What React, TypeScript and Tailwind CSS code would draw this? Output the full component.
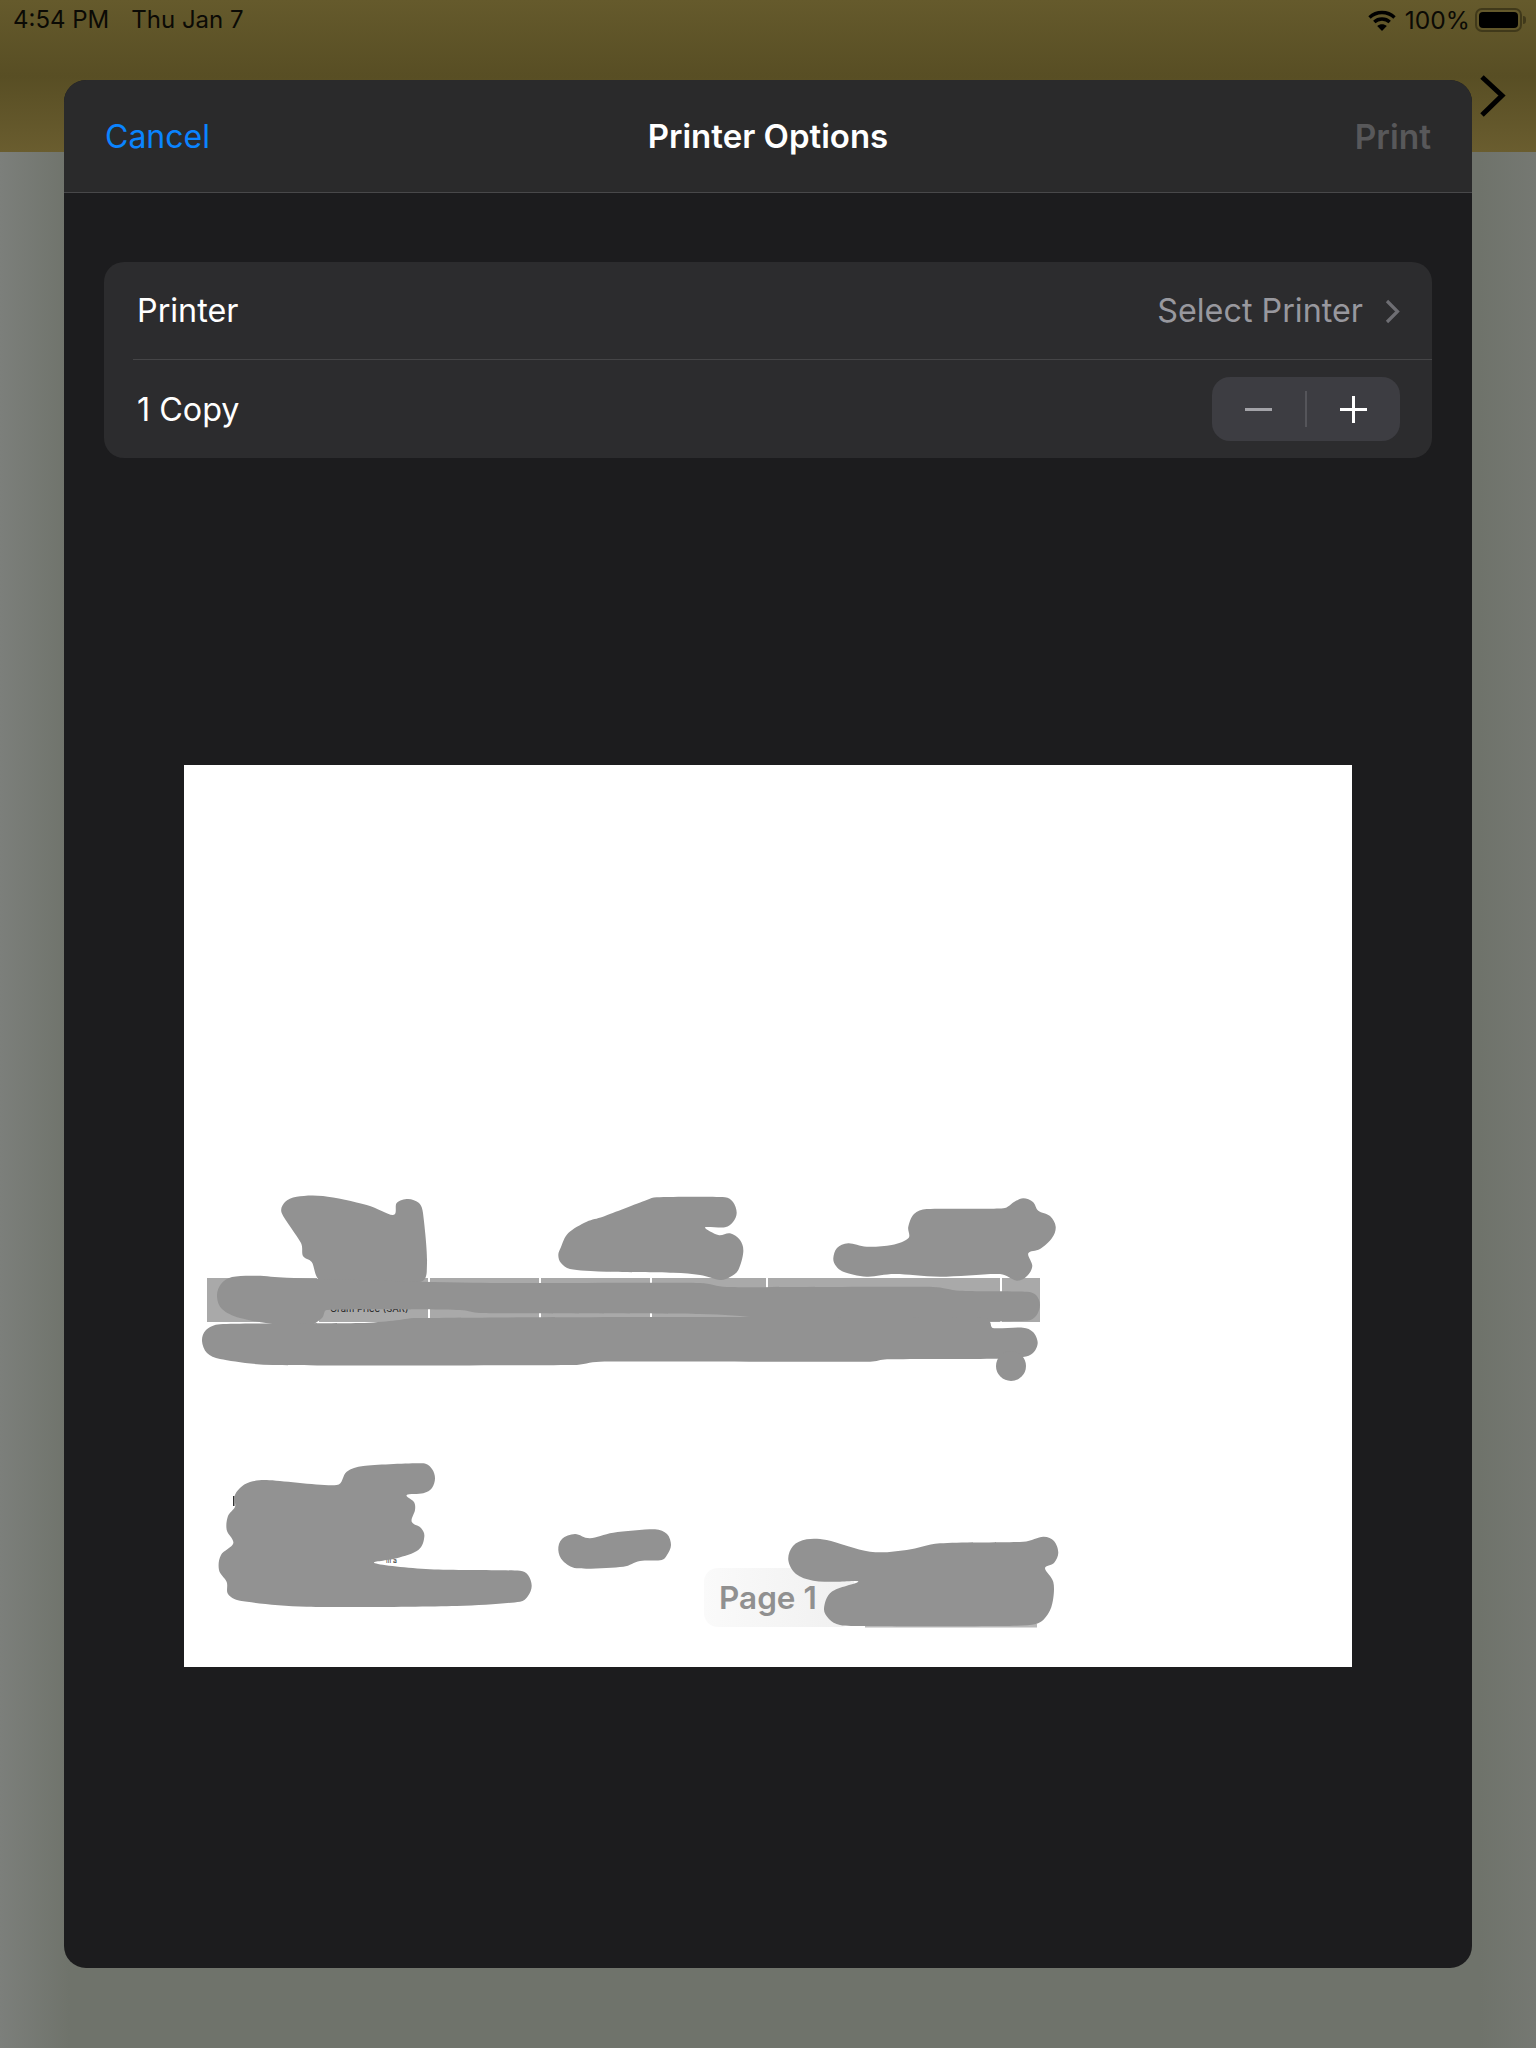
type Pt = [number, number];

// keep a bezier handle shorter than its segment, long neighbours would overshoot otherwise
function handle(from: Pt, to: Pt, dx: number, dy: number): Pt {
  const len = Math.hypot(to[0] - from[0], to[1] - from[1]);
  const size = Math.hypot(dx, dy) || 1;
  const k = Math.min(1, (0.4 * len) / size);
  return [from[0] + dx * k, from[1] + dy * k];
}

// closed catmull-rom through the traced points, so the scribbles stay soft
function blob(points: Pt[]) {
  const n = points.length;
  let d = `M${points[0][0]} ${points[0][1]}`;
  for (let i = 0; i < n; i++) {
    const p0 = points[(i - 1 + n) % n];
    const p1 = points[i];
    const p2 = points[(i + 1) % n];
    const p3 = points[(i + 2) % n];
    const c1 = handle(p1, p2, (p2[0] - p0[0]) / 6, (p2[1] - p0[1]) / 6);
    const c2 = handle(p2, p1, -(p3[0] - p1[0]) / 6, -(p3[1] - p1[1]) / 6);
    d += `C${c1[0].toFixed(1)} ${c1[1].toFixed(1)} ${c2[0].toFixed(1)} ${c2[1].toFixed(1)} ${p2[0]} ${p2[1]}`;
  }
  return d + 'Z';
}

const scribbles: Pt[][] = [
  // top left
  [[281.7, 1213], [285, 1202], [296.7, 1196.7], [323, 1196], [366.7, 1205], [393, 1215], [396.7, 1203], [408, 1199], [419, 1203], [423, 1213], [427, 1263], [420, 1282], [323, 1282], [311.7, 1262], [303, 1256], [301, 1243]],
  // upper line over the table head
  [[217, 1296], [221, 1284], [232, 1277], [257, 1275.7], [287, 1277.7], [473, 1282.7], [700, 1283], [727, 1287], [933, 1287], [960, 1290.7], [1027, 1291.7], [1036, 1295], [1040, 1305], [1036, 1316], [1027, 1320.7], [800, 1324], [760, 1318], [700, 1314], [480, 1313], [460, 1310], [327, 1310], [322, 1318], [310, 1325], [280, 1325], [240, 1318], [222, 1309]],
  // lower line
  [[202, 1341], [206, 1330], [220, 1324.3], [360, 1323], [393, 1320.7], [417, 1318], [700, 1317], [985, 1318], [990, 1322], [993, 1328], [1023, 1327.7], [1033, 1332], [1037.7, 1342.7], [1033, 1353], [1023, 1357], [997, 1358.7], [887, 1359.3], [870, 1361.7], [600, 1361.7], [573, 1365], [273, 1365], [220, 1359], [207, 1353]],
  // top middle
  [[558.3, 1255], [561, 1247], [568.3, 1233], [586.7, 1221.7], [603, 1216.7], [646.7, 1200], [656.7, 1197.3], [725, 1197.3], [733, 1202], [736.7, 1212.7], [733, 1222], [725, 1227.3], [705, 1227.3], [718.3, 1235], [730, 1233.3], [740, 1240], [743.3, 1251.7], [738.3, 1270], [730, 1277], [720, 1280], [700, 1275], [673.3, 1272.7], [606.7, 1271.7], [570, 1269], [561, 1263]],
  // top right
  [[833.3, 1258.3], [837, 1248], [848.3, 1243.3], [866.7, 1246.7], [891.7, 1245], [908.3, 1238.3], [908.3, 1226.7], [914, 1214], [926.7, 1209], [1003.3, 1208.3], [1014, 1202], [1023.3, 1198.3], [1033, 1202], [1038.3, 1210.7], [1050, 1216], [1055.7, 1226.7], [1052, 1238], [1040, 1249], [1028.3, 1253.3], [1032.3, 1266], [1027, 1276], [1016.7, 1280.7], [1000, 1274], [940, 1276.7], [895, 1274], [866.7, 1276.7], [843.3, 1271.7], [836, 1266]],
  // bottom left
  [[234.3, 1496.7], [240, 1488], [250, 1482], [266.7, 1480], [336.7, 1485], [346.7, 1471.7], [363.3, 1466], [423.3, 1463.3], [432, 1469], [435, 1478.3], [432, 1488], [423.3, 1493.3], [406.7, 1495], [414, 1502], [415, 1510], [411.7, 1521.7], [421, 1528], [424.3, 1536.7], [418.3, 1550], [396.7, 1558.3], [375, 1563.3], [430, 1569.3], [520, 1570.7], [528, 1575], [531.7, 1585.7], [528, 1596], [520, 1601.7], [456.7, 1606], [306.7, 1606.7], [240, 1600.7], [228, 1594], [226.7, 1582], [219, 1570], [221, 1555], [233.3, 1543.3], [226.7, 1530], [228, 1516], [235, 1506.7]],
  // bottom middle
  [[558.3, 1550], [562, 1539], [575, 1534], [590, 1538.3], [613.3, 1532.7], [655, 1529.3], [667, 1534], [671, 1545], [667, 1555], [661.7, 1560], [640, 1561], [623.3, 1566.7], [576.7, 1568.3], [563, 1561]],
  // bottom right
  [[788.3, 1560], [793, 1546], [806.7, 1539.3], [826.7, 1540], [870, 1551.7], [906.7, 1550], [940, 1543.3], [1023.3, 1541.7], [1043.3, 1536.7], [1054, 1541], [1058.3, 1552.7], [1054, 1563], [1045, 1568.3], [1053.3, 1582], [1053, 1600], [1048, 1614], [1036, 1624], [1000, 1626], [865, 1626], [840, 1625], [829, 1619], [824, 1608.3], [831.7, 1591.7], [858.3, 1581.7], [836.7, 1581.7], [813.3, 1580.7], [796, 1574]],
];

function StatusBar() {
  return (
    <div className="flex h-[40px] items-center justify-between pl-[13px] pr-[10px] text-[24px] leading-none text-[#0b0a05]">
      <div className="flex gap-[22px]">
        <span>4:54 PM</span>
        <span>Thu Jan 7</span>
      </div>
      <div className="flex items-center">
        <svg width="28" height="21" viewBox="0 0 28 21" className="mr-[9px]">
          <path d="M1.5 7.5C8.5 .8 19.5 .8 26.5 7.5" fill="none" stroke="#000" strokeWidth="3.4" />
          <path d="M6.3 12C10.5 8 17.5 8 21.7 12" fill="none" stroke="#000" strokeWidth="3.4" />
          <path d="M14 21L9.2 16C12 13.6 16 13.6 18.8 16Z" fill="#000" />
        </svg>
        <span className="text-[24.6px]">100%</span>
        <div className="relative ml-[5px] mr-[4px] flex h-[24px] w-[47px] items-center rounded-[7px] border-2 border-[#40391a] p-[2px]">
          <div className="h-full w-full rounded-[4px] bg-black" />
          <div className="absolute right-[-6px] h-[8px] w-[3px] rounded-r-full bg-[#40391a]" />
        </div>
      </div>
    </div>
  );
}

function PagePreview() {
  return (
    <div className="relative h-[902px] w-[1168px] bg-white">
      <div className="absolute left-[520px] top-[803px] flex h-[59px] w-[150px] items-center rounded-[14px] bg-gradient-to-r from-[#fafafa] to-[#f0f0f0] pl-[15px] text-[31.5px] font-semibold text-[#909090]">
        Page 1
      </div>
      <svg viewBox="184 765 1168 902" className="absolute inset-0 h-full w-full">
        <rect x="207" y="1278" width="833" height="44" fill="#a9a9a9" />
        {[318, 429, 540, 651, 767, 1001].map((x) => (
          <rect key={x} x={x - 1} y="1278" width="2" height="44" fill="#fff" />
        ))}
        <text x="330" y="1312" fontSize="9.5" fill="#222" fontFamily="Inter, sans-serif">
          Gram Price (SAR)
        </text>
        <rect x="233" y="1496" width="1.5" height="10" fill="#333" />
        <text x="386" y="1563" fontSize="7" fill="#333" fontFamily="Inter, sans-serif">
          ill a
        </text>
        <rect x="865" y="1624" width="172" height="3.5" fill="#b8b8b8" />
        {scribbles.map((points, i) => (
          <path key={i} d={blob(points)} fill="#929292" />
        ))}
        <circle cx="1011" cy="1366" r="15" fill="#929292" />
      </svg>
    </div>
  );
}

export default function App() {
  return (
    <div className="relative h-[2048px] w-[1536px] overflow-hidden bg-[linear-gradient(to_right,#7c7f7b_0px,#6f736b_70px,#6f736b_1480px,#757872_100%)] font-['Inter',sans-serif]">
      {/* app bar behind the sheet */}
      <div className="h-[152px] bg-[linear-gradient(to_bottom,#655a2c_0%,#584e24_50%,#6a5d2f_100%)]">
        <StatusBar />
      </div>

      {/* chevron of the page behind, sticks out beside the sheet */}
      <svg width="28" height="44" viewBox="0 0 28 44" className="absolute left-[1479px] top-[74px]">
        <path d="M3 3L23 21.5L3 41" fill="none" stroke="#000" strokeWidth="5" />
      </svg>

      {/* sheet */}
      <div className="absolute left-[64px] top-[80px] flex h-[1888px] w-[1408px] flex-col overflow-hidden rounded-[22px] bg-[#1c1c1e]">
        <div className="grid h-[113px] shrink-0 grid-cols-3 items-center border-b border-[#48484a] bg-[#2a2a2b] px-[41px] pt-[2px]">
          <span className="text-[32px] text-[#0a84ff]">Cancel</span>
          <span className="whitespace-nowrap text-center text-[33px] font-semibold text-white">Printer Options</span>
          <span className="text-right text-[33.5px] font-semibold text-[#58585a]">Print</span>
        </div>

        <div className="mx-[40px] mt-[69px] flex flex-col rounded-[20px] bg-[#2c2c2e] text-[32.3px] text-white">
          <div className="ml-[29px] flex h-[98px] items-center justify-between border-b border-[#454547] pl-[4px] pr-[32px] pt-[2px]">
            <span>Printer</span>
            <div className="flex items-center gap-[22px] text-[#98989e]">
              <span>Select Printer</span>
              <svg width="15" height="25" viewBox="0 0 15 25">
                <path d="M2 2L12.5 12.5L2 23" fill="none" stroke="#6e6e73" strokeWidth="3.2" />
              </svg>
            </div>
          </div>
          <div className="ml-[29px] flex h-[98px] items-center justify-between pl-[4px] pr-[32px]">
            <span className="pt-[2px]">1 Copy</span>
            <div className="flex h-[64px] w-[188px] items-center rounded-[18px] bg-[#3d3d42]">
              <div className="flex flex-1 justify-center">
                <div className="h-[3px] w-[27px] bg-[#a3a3a8]" />
              </div>
              <div className="h-[36px] w-[2px] bg-[#55555a]" />
              <div className="relative flex flex-1 items-center justify-center">
                <div className="h-[3px] w-[27px] bg-white" />
                <div className="absolute h-[27px] w-[3px] bg-white" />
              </div>
            </div>
          </div>
        </div>

        <div className="mt-[307px] flex justify-center">
          <PagePreview />
        </div>
      </div>
    </div>
  );
}
